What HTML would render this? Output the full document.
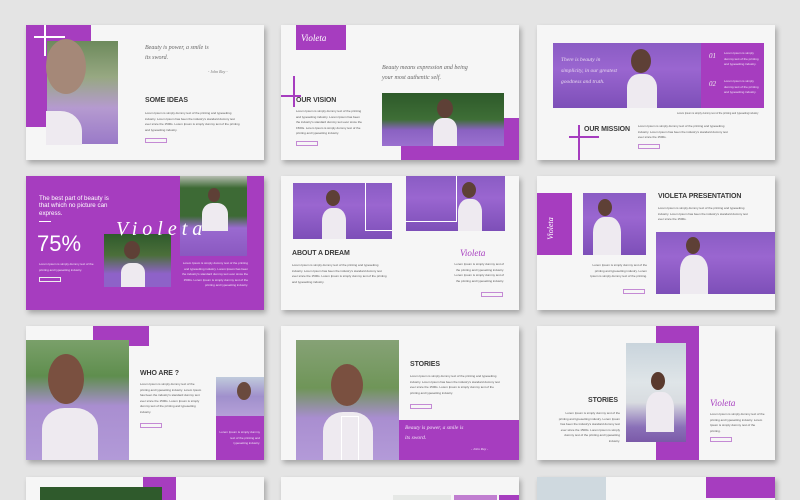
<!DOCTYPE html>
<html><head><meta charset="utf-8"><style>
*{margin:0;padding:0;box-sizing:border-box}
html{width:800px;height:500px;overflow:hidden}
body{width:800px;height:500px;background:#e4e4e4;position:relative;overflow:hidden;font-family:"Liberation Sans",sans-serif}
.s{position:absolute;background:#f6f6f6;box-shadow:2px 3px 5px rgba(0,0,0,.28);overflow:hidden}
.a{position:absolute}
.p{background:#a63dbf}
.h{position:absolute;font-weight:bold;color:#3a3a3a;font-size:7px;letter-spacing:-.1px;white-space:nowrap}
.t{position:absolute;font-size:3px;line-height:5.5px;color:#555}
.tw{position:absolute;font-size:3px;line-height:5.5px;color:#f2e6f6}
.sc{position:absolute;font-family:"Liberation Serif",serif;font-style:italic;white-space:nowrap}
.b{position:absolute;width:22px;height:5px;border:1px solid #c48ad4}
.bw{position:absolute;width:22px;height:5px;border:1px solid #eee}
.lav{background:linear-gradient(180deg,#8a5cc4,#9a66d0 40%,#7d4fb8)}
.grn{background:linear-gradient(180deg,#2e5a2a,#3e6e36 50%,#8a62c2 70%,#9a70cf)}
.fig{position:absolute;background:#eeeaf0;border-radius:40% 40% 0 0}
.hair{position:absolute;background:#5e4036;border-radius:50%}
</style></head><body>

<!-- Slide 1 -->
<div class="s" style="left:26px;top:25px;width:238px;height:135px">
 <div class="a p" style="left:0;top:0;width:65px;height:102px"></div>
 <div class="a" style="left:21px;top:16px;width:71px;height:103px;background:linear-gradient(180deg,#6d8a5c 0%,#97a882 35%,#b59ad0 65%,#9a7ac8 100%)"></div>
 <div class="hair" style="left:20px;top:14px;width:40px;height:55px;background:#a58878"></div>
 <div class="fig" style="left:20px;top:86px;width:36px;height:34px;border-radius:0 60% 0 0"></div>
 <div class="a" style="left:18px;top:0;width:1.5px;height:31px;background:#fff"></div>
 <div class="a" style="left:8px;top:11px;width:31px;height:1.5px;background:#fff"></div>
 <div class="sc" style="left:119px;top:18px;font-size:6px;color:#666;line-height:10px">Beauty is power, a smile is<br>its sword.</div>
 <div class="sc" style="left:182px;top:44px;font-size:4px;color:#777">- John Ray -</div>
 <div class="h" style="left:119px;top:72px">SOME IDEAS</div>
 <div class="t" style="left:119px;top:86px;width:95px">Lorem Ipsum is simply dummy text of the printing and typesetting industry. Lorem Ipsum has been the industry's standard dummy text ever since the 1500s. Lorem Ipsum is simply dummy text of the printing and typesetting industry.</div>
 <div class="b" style="left:119px;top:113px"></div>
</div>

<!-- Slide 2 -->
<div class="s" style="left:281px;top:25px;width:238px;height:135px">
 <div class="a p" style="left:15px;top:0;width:50px;height:25px"></div>
 <div class="sc" style="left:20px;top:8px;font-size:9px;color:#fff">Violeta</div>
 <div class="a" style="left:120px;top:93px;width:118px;height:42px;background:#a63dbf"></div>
 <div class="a grn" style="left:101px;top:68px;width:122px;height:53px"></div>
 <div class="hair" style="left:156px;top:74px;width:16px;height:19px"></div>
 <div class="fig" style="left:152px;top:93px;width:24px;height:28px"></div>
 <div class="a" style="left:12px;top:51px;width:2px;height:31px;background:#a63dbf"></div>
 <div class="a" style="left:0;top:70px;width:20px;height:2px;background:#a63dbf"></div>
 <div class="sc" style="left:101px;top:38px;font-size:6px;color:#666;line-height:10px">Beauty means expression and being<br>your most authentic self.</div>
 <div class="h" style="left:15px;top:72px">OUR VISION</div>
 <div class="t" style="left:15px;top:84px;width:68px">Lorem Ipsum is simply dummy text of the printing and typesetting industry. Lorem Ipsum has been the industry's standard dummy text ever since the 1500s. Lorem Ipsum is simply dummy text of the printing and typesetting industry.</div>
 <div class="b" style="left:15px;top:116px"></div>
</div>

<!-- Slide 3 -->
<div class="s" style="left:537px;top:25px;width:238px;height:135px">
 <div class="a lav" style="left:16px;top:18px;width:148px;height:65px"></div>
 <div class="hair" style="left:94px;top:24px;width:20px;height:24px"></div>
 <div class="fig" style="left:90px;top:49px;width:30px;height:34px"></div>
 <div class="sc" style="left:24px;top:30px;font-size:5.5px;color:#e8d8f0;line-height:11px">There is beauty in<br>simplicity, in our greatest<br>goodness and truth.</div>
 <div class="a p" style="left:164px;top:18px;width:63px;height:65px"></div>
 <div class="sc" style="left:172px;top:27px;font-size:7px;color:#eee">01</div>
 <div class="sc" style="left:172px;top:55px;font-size:7px;color:#eee">02</div>
 <div class="tw" style="left:187px;top:26px;width:36px">Lorem Ipsum is simply dummy text of the printing and typesetting industry.</div>
 <div class="tw" style="left:187px;top:54px;width:36px">Lorem Ipsum is simply dummy text of the printing and typesetting industry.</div>
 <div class="t" style="left:140px;top:86px;font-size:2.5px;white-space:nowrap">Lorem Ipsum is simply dummy text of the printing and typesetting industry</div>
 <div class="a" style="left:41px;top:100px;width:2px;height:35px;background:#a63dbf"></div>
 <div class="a" style="left:32px;top:111px;width:30px;height:2px;background:#a63dbf"></div>
 <div class="h" style="left:47px;top:101px">OUR MISSION</div>
 <div class="t" style="left:101px;top:99px;width:90px">Lorem Ipsum is simply dummy text of the printing and typesetting industry. Lorem Ipsum has been the industry's standard dummy text ever since the 1500s.</div>
 <div class="b" style="left:101px;top:119px"></div>
</div>

<!-- Slide 4 -->
<div class="s p" style="left:26px;top:176px;width:238px;height:134px">
 <div class="a grn" style="left:154px;top:0;width:67px;height:80px;background:linear-gradient(180deg,#b5bcb0 0,#3d6a35 15%,#3d6a35 50%,#9a6ad0 65%,#8a58c0)"></div>
 <div class="hair" style="left:182px;top:12px;width:12px;height:14px"></div>
 <div class="fig" style="left:176px;top:27px;width:26px;height:28px"></div>
 <div class="a grn" style="left:78px;top:58px;width:67px;height:53px;background:linear-gradient(180deg,#2f5a2c,#4b6f3a 40%,#8e62c8 75%)"></div>
 <div class="hair" style="left:98px;top:65px;width:16px;height:18px"></div>
 <div class="fig" style="left:95px;top:87px;width:24px;height:24px"></div>
 <div class="a" style="left:13px;top:19px;color:#fff;font-size:6.2px;line-height:7.3px;width:75px">The best part of beauty is that which no picture can express.</div>
 <div class="a" style="left:13px;top:44.5px;width:12px;height:1.3px;background:#fff"></div>
 <div class="a" style="left:11px;top:55px;color:#fff;font-size:22px">75%</div>
 <div class="sc" style="left:90px;top:42px;font-size:20px;color:#fff;letter-spacing:5px">Violeta</div>
 <div class="tw" style="left:13px;top:86px;width:55px">Lorem Ipsum is simply dummy text of the printing and typesetting industry.</div>
 <div class="bw" style="left:13px;top:101px"></div>
 <div class="tw" style="left:155px;top:85px;width:67px;text-align:right">Lorem Ipsum is simply dummy text of the printing and typesetting industry. Lorem Ipsum has been the industry's standard dummy text ever since the 1500s. Lorem Ipsum is simply dummy text of the printing and typesetting industry.</div>
</div>

<!-- Slide 5 -->
<div class="s" style="left:281px;top:176px;width:238px;height:134px">
 <div class="a lav" style="left:12px;top:7px;width:99px;height:56px"></div>
 <div class="hair" style="left:45px;top:14px;width:14px;height:16px"></div>
 <div class="fig" style="left:41px;top:32px;width:24px;height:31px"></div>
 <div class="a" style="left:84px;top:7px;width:27px;height:48px;border:1.3px solid #fff;border-top:none;border-right:none"></div>
 <div class="a lav" style="left:125px;top:0;width:99px;height:55px"></div>
 <div class="a" style="left:124px;top:0;width:52px;height:46px;border-right:1.3px solid #fff;border-bottom:1.3px solid #fff"></div>
 <div class="hair" style="left:181px;top:6px;width:14px;height:16px"></div>
 <div class="fig" style="left:177px;top:23px;width:24px;height:32px"></div>
 <div class="h" style="left:11px;top:74px">ABOUT A DREAM</div>
 <div class="t" style="left:11px;top:87px;width:95px">Lorem Ipsum is simply dummy text of the printing and typesetting industry. Lorem Ipsum has been the industry's standard dummy text ever since the 1500s. Lorem Ipsum is simply dummy text of the printing and typesetting industry.</div>
 <div class="sc" style="left:179px;top:72px;font-size:9px;color:#a63dbf">Violeta</div>
 <div class="t" style="left:170px;top:86px;width:53px;text-align:right">Lorem Ipsum is simply dummy text of the printing and typesetting industry. Lorem Ipsum is simply dummy text of the printing and typesetting industry.</div>
 <div class="b" style="left:200px;top:116px"></div>
</div>

<!-- Slide 6 -->
<div class="s" style="left:537px;top:176px;width:238px;height:134px">
 <div class="a p" style="left:0;top:17px;width:35px;height:62px"></div>
 <div class="sc" style="left:2px;top:48px;font-size:8px;color:#fff;transform:rotate(-90deg)">Violeta</div>
 <div class="a lav" style="left:46px;top:17px;width:63px;height:62px"></div>
 <div class="hair" style="left:61px;top:23px;width:14px;height:17px"></div>
 <div class="fig" style="left:56px;top:41px;width:28px;height:38px"></div>
 <div class="h" style="left:121px;top:17px">VIOLETA PRESENTATION</div>
 <div class="t" style="left:121px;top:30px;width:90px">Lorem Ipsum is simply dummy text of the printing and typesetting industry. Lorem Ipsum has been the industry's standard dummy text ever since the 1500s.</div>
 <div class="a lav" style="left:119px;top:56px;width:119px;height:62px"></div>
 <div class="hair" style="left:149px;top:61px;width:14px;height:17px"></div>
 <div class="fig" style="left:143px;top:79px;width:28px;height:39px"></div>
 <div class="t" style="left:50px;top:87px;width:60px;text-align:right">Lorem Ipsum is simply dummy text of the printing and typesetting industry. Lorem Ipsum is simply dummy text of the printing.</div>
 <div class="b" style="left:86px;top:113px"></div>
</div>

<!-- Slide 7 -->
<div class="s" style="left:26px;top:326px;width:238px;height:134px">
 <div class="a p" style="left:67px;top:0;width:56px;height:20px"></div>
 <div class="a" style="left:0;top:14px;width:103px;height:120px;background:linear-gradient(180deg,#7aa06a 0,#5f8e4e 30%,#a98ed0 55%,#b29ad8 100%)"></div>
 <div class="hair" style="left:22px;top:28px;width:36px;height:50px;background:#7a5040"></div>
 <div class="fig" style="left:16px;top:82px;width:56px;height:52px"></div>
 <div class="h" style="left:114px;top:44px">WHO ARE ?</div>
 <div class="t" style="left:114px;top:56px;width:62px">Lorem Ipsum is simply dummy text of the printing and typesetting industry. Lorem Ipsum has been the industry's standard dummy text ever since the 1500s. Lorem Ipsum is simply dummy text of the printing and typesetting industry.</div>
 <div class="b" style="left:114px;top:97px"></div>
 <div class="a" style="left:190px;top:51px;width:48px;height:39px;background:linear-gradient(180deg,#c0cadc,#a090cc 50%,#b5a0d8)"></div>
 <div class="hair" style="left:211px;top:56px;width:14px;height:18px;background:#6a4a3e"></div>
 <div class="a p" style="left:190px;top:90px;width:48px;height:44px"></div>
 <div class="tw" style="left:192px;top:104px;width:42px;text-align:right">Lorem Ipsum is simply dummy text of the printing and typesetting industry.</div>
</div>

<!-- Slide 8 -->
<div class="s" style="left:281px;top:326px;width:238px;height:134px">
 <div class="a" style="left:15px;top:14px;width:103px;height:120px;background:linear-gradient(180deg,#86a276 0,#6f9558 40%,#a98ed0 65%,#b39ad8 100%)"></div>
 <div class="hair" style="left:50px;top:38px;width:32px;height:42px;background:#7a5040"></div>
 <div class="fig" style="left:42px;top:86px;width:50px;height:48px"></div>
 <div class="a" style="left:60px;top:90px;width:18px;height:44px;border:1px solid #fff;border-bottom:none"></div>
 <div class="a p" style="left:118px;top:94px;width:120px;height:40px"></div>
 <div class="sc" style="left:124px;top:97px;font-size:5.5px;color:#f3e6f8;line-height:10px">Beauty is power, a smile is<br>its sword.</div>
 <div class="sc" style="left:190px;top:121px;font-size:3.5px;color:#f3e6f8">- John Ray -</div>
 <div class="h" style="left:129px;top:35px">STORIES</div>
 <div class="t" style="left:129px;top:48px;width:90px">Lorem Ipsum is simply dummy text of the printing and typesetting industry. Lorem Ipsum has been the industry's standard dummy text ever since the 1500s. Lorem Ipsum is simply dummy text of the printing and typesetting industry.</div>
 <div class="b" style="left:129px;top:78px"></div>
</div>

<!-- Slide 9 -->
<div class="s" style="left:537px;top:326px;width:238px;height:134px">
 <div class="a p" style="left:119px;top:0;width:43px;height:134px"></div>
 <div class="a" style="left:89px;top:17px;width:60px;height:99px;background:linear-gradient(180deg,#c9d4dc 0,#dfe5e8 40%,#d8dce0 60%,#8a70b8 85%,#7b5aa8)"></div>
 <div class="hair" style="left:114px;top:46px;width:14px;height:18px;background:#5a3a2e"></div>
 <div class="fig" style="left:109px;top:66px;width:28px;height:40px"></div>
 <div class="h" style="left:51px;top:71px">STORIES</div>
 <div class="t" style="left:18px;top:85px;width:65px;text-align:right">Lorem Ipsum is simply dummy text of the printing and typesetting industry. Lorem Ipsum has been the industry's standard dummy text ever since the 1500s. Lorem Ipsum is simply dummy text of the printing and typesetting industry.</div>
 <div class="sc" style="left:173px;top:72px;font-size:9px;color:#a63dbf">Violeta</div>
 <div class="t" style="left:173px;top:86px;width:55px">Lorem Ipsum is simply dummy text of the printing and typesetting industry. Lorem Ipsum is simply dummy text of the printing.</div>
 <div class="b" style="left:173px;top:111px"></div>
</div>

<!-- Row 4 -->
<div class="s" style="left:26px;top:477px;width:238px;height:30px">
 <div class="a p" style="left:117px;top:0;width:33px;height:30px"></div>
 <div class="a" style="left:14px;top:10px;width:122px;height:20px;background:#2f5a2c"></div>
</div>
<div class="s" style="left:281px;top:477px;width:238px;height:30px">
 <div class="a" style="left:173px;top:18px;width:43px;height:12px;background:#c07ed0"></div>
 <div class="a p" style="left:218px;top:18px;width:20px;height:12px"></div>
 <div class="a" style="left:112px;top:18px;width:58px;height:12px;background:#e6e8e6"></div>
</div>
<div class="s" style="left:537px;top:477px;width:238px;height:30px">
 <div class="a" style="left:0;top:0;width:69px;height:30px;background:#cfd9df"></div>
 <div class="a p" style="left:169px;top:0;width:69px;height:21px"></div>
</div>

</body></html>
